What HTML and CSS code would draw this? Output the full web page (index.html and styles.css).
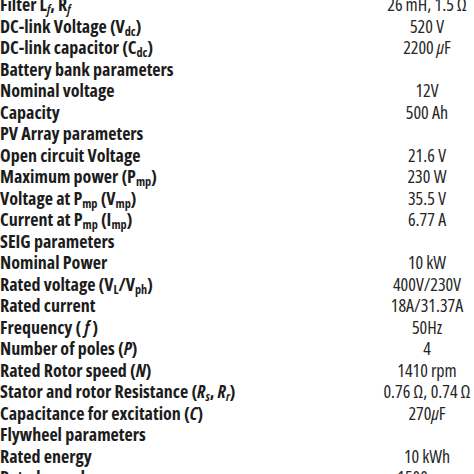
FILE: index.html
```html
<!DOCTYPE html>
<html>
<head>
<meta charset="utf-8">
<link rel="stylesheet" href="styles.css">
</head>
<body>
<div class="table">
  <div class="row"><div class="name">Filter L<sub><i>f</i></sub>, R<sub><i>f</i></sub></div><div class="val">26&#8201;mH, 1.5&#8201;&Omega;</div></div>
  <div class="row"><div class="name">DC-link Voltage (V<sub>dc</sub>)</div><div class="val">520 V</div></div>
  <div class="row"><div class="name">DC-link capacitor (C<sub>dc</sub>)</div><div class="val">2200&#8201;<i>&mu;</i>F</div></div>
  <div class="row"><div class="name">Battery bank parameters</div><div class="val"></div></div>
  <div class="row"><div class="name">Nominal voltage</div><div class="val">12V</div></div>
  <div class="row"><div class="name">Capacity</div><div class="val">500 Ah</div></div>
  <div class="row"><div class="name">PV Array parameters</div><div class="val"></div></div>
  <div class="row"><div class="name">Open circuit Voltage</div><div class="val">21.6 V</div></div>
  <div class="row"><div class="name">Maximum power (P<sub>mp</sub>)</div><div class="val">230 W</div></div>
  <div class="row"><div class="name">Voltage at P<sub>mp</sub> (V<sub>mp</sub>)</div><div class="val">35.5 V</div></div>
  <div class="row"><div class="name">Current at P<sub>mp</sub> (I<sub>mp</sub>)</div><div class="val">6.77 A</div></div>
  <div class="row"><div class="name">SEIG parameters</div><div class="val"></div></div>
  <div class="row"><div class="name">Nominal Power</div><div class="val">10&#8201;kW</div></div>
  <div class="row"><div class="name">Rated voltage (V<sub>L</sub>/V<sub>ph</sub>)</div><div class="val">400V/230V</div></div>
  <div class="row"><div class="name">Rated current</div><div class="val">18A/31.37A</div></div>
  <div class="row"><div class="name">Frequency ( <i>f</i> )</div><div class="val">50Hz</div></div>
  <div class="row"><div class="name">Number of poles (<i>P</i>)</div><div class="val">4</div></div>
  <div class="row"><div class="name">Rated Rotor speed (<i>N</i>)</div><div class="val">1410&#8201;rpm</div></div>
  <div class="row"><div class="name">Stator and rotor Resistance (<i>R<sub>s</sub></i>, <i>R<sub>r</sub></i>)</div><div class="val">0.76&#8201;&Omega;, 0.74&#8201;&Omega;</div></div>
  <div class="row"><div class="name">Capacitance for excitation (<i>C</i>)</div><div class="val">270 <i>&mu;</i>F</div></div>
  <div class="row"><div class="name">Flywheel parameters</div><div class="val"></div></div>
  <div class="row"><div class="name">Rated energy</div><div class="val">10&#8201;kWh</div></div>
  <div class="row"><div class="name">Rated speed</div><div class="val">1500&#8201;rpm</div></div>
</div>
</body>
</html>
```

FILE: styles.css
```css
html, body {
  margin: 0;
  padding: 0;
  background: #ffffff;
  overflow: hidden;
}
.table {
  margin-top: -6px;
  font-family: "Open Sans", "Noto Sans", sans-serif;
  font-stretch: 87.5%;
  font-size: 18px;
  color: #1c1c1c;
}
.row {
  display: grid;
  grid-template-columns: 380px 94px;
  height: 21.5px;
  line-height: 21.5px;
  white-space: nowrap;
}
.name {
  font-weight: 700;
}
.val {
  color: #262626;
  display: flex;
  justify-content: center;
}
sub {
  font-size: 0.68em;
  vertical-align: -0.25em;
  line-height: 0;
}
```
